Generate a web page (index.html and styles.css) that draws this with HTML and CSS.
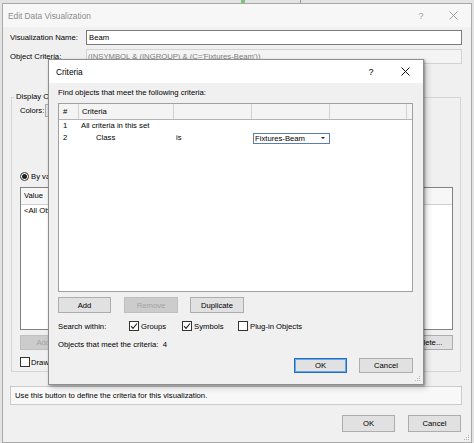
FILE: index.html
```html
<!DOCTYPE html>
<html>
<head>
<meta charset="utf-8">
<title>Edit Data Visualization</title>
<link rel="stylesheet" href="styles.css">
</head>
<body>
<div class="desk"><span class="desk-gap1"></span><span class="desk-green"></span><span class="desk-gap2"></span><span class="desk-line"></span></div>

<div class="win outer">
  <div class="titlebar outer-title">
    <span class="title-text">Edit Data Visualization</span>
    <span class="tb-help">?</span>
    <span class="tb-close"><svg width="9" height="9" viewBox="0 0 9 9"><path d="M0.5 0.5L8.5 8.5M8.5 0.5L0.5 8.5" stroke="#9a9a9a" stroke-width="1" fill="none"/></svg></span>
  </div>
  <div class="outer-body">
    <div class="form-row r1">
      <span class="lbl">Visualization Name:</span>
      <div class="textbox">Beam</div>
    </div>
    <div class="form-row r2">
      <span class="lbl">Object Criteria:</span>
      <div class="textbox readonly"><span class="crit-link">(INSYMBOL &amp; (INGROUP) &amp; (C='Fixtures-Beam'))</span></div>
    </div>
    <fieldset class="group">
      <legend><span class="legend-clip">Display Options</span></legend>
      <div class="colors-row"><span class="colors-lbl">Colors:</span><div class="combo"></div></div>
      <div class="radio-row"><span class="radio"><span class="radio-dot"></span></span><span>By value</span></div>
      <div class="listview">
        <div class="lv-head"><span class="lv-col lv-value">Value</span><span class="lv-col lv-rest"></span></div>
        <div class="lv-row">&lt;All Objects&gt;</div>
      </div>
      <div class="list-btns"><button class="btn btn-add" disabled>Add...</button><button class="btn btn-del">Delete...</button></div>
      <div class="check-row"><span class="checkbox"></span><span>Draw legend</span></div>
    </fieldset>
    <div class="status">Use this button to define the criteria for this visualization.</div>
    <div class="footer"><button class="btn fbtn">OK</button><button class="btn fbtn">Cancel</button></div>
  </div>
  <span class="grip outer-grip"><svg width="7" height="7" viewBox="0 0 7 7"><rect x="5" y="1" width="1" height="1" fill="#b5b5b5"/><rect x="3" y="3" width="1" height="1" fill="#b5b5b5"/><rect x="5" y="3" width="1" height="1" fill="#b5b5b5"/><rect x="1" y="5" width="1" height="1" fill="#b5b5b5"/><rect x="3" y="5" width="1" height="1" fill="#b5b5b5"/><rect x="5" y="5" width="1" height="1" fill="#b5b5b5"/></svg></span>
</div>

<div class="win criteria">
  <div class="titlebar crit-title">
    <span class="title-text">Criteria</span>
    <span class="tb-help">?</span>
    <span class="tb-close"><svg width="9" height="9" viewBox="0 0 9 9"><path d="M0.5 0.5L8.5 8.5M8.5 0.5L0.5 8.5" stroke="#111" stroke-width="1" fill="none"/></svg></span>
  </div>
  <div class="crit-body">
    <div class="find">Find objects that meet the following criteria:</div>
    <div class="ctable">
      <div class="crow chead">
        <span class="cc c1">#</span><span class="cc c2">Criteria</span><span class="cc c3"></span><span class="cc c4"></span><span class="cc c5"></span><span class="cc c6"></span>
      </div>
      <div class="crow cdata">
        <span class="cc c1">1</span><span class="cc c2 wide">All criteria in this set</span><span class="cc c3"></span><span class="cc c4"></span><span class="cc c5"></span><span class="cc c6"></span>
      </div>
      <div class="crow cdata">
        <span class="cc c1">2</span><span class="cc c2 indent">Class</span><span class="cc c3">is</span><span class="cc c4"><span class="dropdown"><span class="dd-text">Fixtures-Beam</span><span class="dd-arrow"></span></span></span><span class="cc c5"></span><span class="cc c6"></span>
      </div>
    </div>
    <div class="crit-btns">
      <button class="btn cb-add">Add</button>
      <button class="btn cb-remove" disabled>Remove</button>
      <button class="btn cb-dup">Duplicate</button>
    </div>
    <div class="search-row">
      <span class="search-lbl">Search within:</span>
      <span class="chk-item chk-groups"><span class="checkbox checked"><svg width="8" height="8" viewBox="0 0 8 8"><path d="M1 4.2L3 6.3L7 1.5" stroke="#222" stroke-width="1.1" fill="none"/></svg></span><span>Groups</span></span>
      <span class="chk-item chk-symbols"><span class="checkbox checked"><svg width="8" height="8" viewBox="0 0 8 8"><path d="M1 4.2L3 6.3L7 1.5" stroke="#222" stroke-width="1.1" fill="none"/></svg></span><span>Symbols</span></span>
      <span class="chk-item"><span class="checkbox"></span><span>Plug-in Objects</span></span>
    </div>
    <div class="count-row">Objects that meet the criteria:&nbsp; 4</div>
    <div class="ok-row"><button class="btn ok-btn">OK</button><button class="btn cancel-btn">Cancel</button></div>
  </div>
  <span class="grip crit-grip"><svg width="7" height="7" viewBox="0 0 7 7"><rect x="5" y="1" width="1" height="1" fill="#b5b5b5"/><rect x="3" y="3" width="1" height="1" fill="#b5b5b5"/><rect x="5" y="3" width="1" height="1" fill="#b5b5b5"/><rect x="1" y="5" width="1" height="1" fill="#b5b5b5"/><rect x="3" y="5" width="1" height="1" fill="#b5b5b5"/><rect x="5" y="5" width="1" height="1" fill="#b5b5b5"/></svg></span>
</div>
</body>
</html>
```

FILE: styles.css
```css
* { box-sizing: border-box; }
html, body { margin: 0; padding: 0; }
body {
  width: 474px;
  height: 443px;
  overflow: hidden;
  position: relative;
  background: #e3e3e3;
  font-family: "Liberation Sans", Arial, sans-serif;
  font-size: 7.7px;
  color: #000;
}

/* desktop strip behind the windows */
.desk { height: 3px; display: flex; }
.desk-gap1 { width: 241px; }
.desk-green { width: 4px; background: #7cc47c; }
.desk-gap2 { width: 55px; }
.desk-line { width: 1px; background: #9a9a9a; }

/* generic window */
.win { background: #f0f0f0; display: flex; flex-direction: column; }
.titlebar { height: 23px; display: flex; align-items: center; flex: 0 0 auto; }
.title-text { font-size: 8.3px; flex: 1; }
.tb-help { width: 34px; text-align: center; font-size: 9px; }
.tb-close { width: 34px; display: flex; justify-content: center; align-items: center; margin-right: 1px; }

/* outer window */
.outer {
  margin-left: 2px;
  width: 470px;
  height: 440px;
  border: 1px solid #a9a9a9;
  position: relative;
}
.outer-title { background: #f7f7f7; padding-left: 5px; }
.outer-title .title-text { color: #8c8c8c; }
.outer-title .tb-help { color: #9a9a9a; width: 30px; }

.outer-body { padding: 0 9px 0 7px; display: flex; flex-direction: column; }
.form-row { display: flex; align-items: center; height: 15px; }
.r1 { margin-top: 3px; }
.r2 { margin-top: 4px; }
.lbl { width: 76px; flex: 0 0 76px; }
.textbox {
  flex: 1;
  height: 15px;
  border: 1px solid #7a7a7a;
  background: #fff;
  padding-left: 2px;
  line-height: 13px;
  white-space: nowrap;
  overflow: hidden;
}
.readonly { background: #f4f4f4; border-color: #d3d3d3; color: #808080; padding-left: 1px; }
.crit-link { text-decoration: underline; }

.group {
  margin: 28px 1px 0;
  padding: 0 7px 3px 8px;
  border: 1px solid #d5d5d5;
  min-width: 0;
  height: 280px;
}
.group legend { padding: 0 2px; margin-left: -6px; line-height: 10px; font-size: 7.7px; }
.legend-clip { display: block; width: 32px; overflow: hidden; white-space: nowrap; }
.colors-row { margin-top: 2px; height: 13px; display: flex; align-items: center; }
.colors-lbl { width: 25px; }
.combo { width: 150px; height: 13px; border: 1px solid #adadad; background: #e5e5e5; }
.radio-row { margin-top: 53px; height: 12px; display: flex; align-items: center; gap: 2px; }
.radio {
  width: 9px; height: 9px; border: 1px solid #333; border-radius: 50%; background: #fff;
  display: flex; align-items: center; justify-content: center;
}
.radio-dot { width: 5px; height: 5px; border-radius: 50%; background: #222; }
.listview { margin-top: 5px; height: 143px; border: 1px solid #828282; background: #fff; }
.lv-head { height: 17px; display: flex; border-bottom: 1px solid #d0d0d0; background: #f7f7f7; }
.lv-col { line-height: 16px; padding-left: 3px; }
.lv-value { width: 29px; border-right: 1px solid #e0e0e0; }
.lv-rest { flex: 1; }
.lv-row { height: 12px; line-height: 12px; padding-left: 3px; }
.list-btns { margin-top: 5px; height: 15px; display: flex; justify-content: space-between; }
.btn-add { width: 53px; }
.btn-del { width: 50px; margin-right: 9px; padding-left: 4px; }
.check-row { margin-top: 7px; height: 10px; display: flex; align-items: center; gap: 1px; }
.checkbox {
  width: 10px; height: 10px; border: 1px solid #333; background: #fff; flex: 0 0 10px;
  display: flex; align-items: center; justify-content: center;
}

.status {
  margin-top: 14px;
  height: 19px;
  border: 1px solid #cbcbcb;
  background: #f8f8f8;
  padding-left: 4px;
  line-height: 17px;
}
.footer { margin-top: 10px; display: flex; justify-content: flex-end; gap: 13px; padding-right: 1px; }
.fbtn { width: 53px; height: 17px; }

.grip { position: absolute; display: block; width: 7px; height: 7px; }
.outer-grip { right: 1px; bottom: 1px; }
.crit-grip { right: 2px; bottom: 2px; }

/* buttons */
.btn {
  font-family: inherit;
  font-size: 7.7px;
  color: #000;
  background: #e1e1e1;
  border: 1px solid #adadad;
  padding: 0;
  margin: 0;
  text-align: center;
}
.btn:disabled { background: #cccccc; border-color: #bfbfbf; color: #a3a3a3; }

/* criteria dialog */
.criteria {
  position: absolute;
  left: 48px;
  top: 59px;
  width: 376px;
  height: 326px;
  border: 1px solid #8f8f8f;
  box-shadow: 1px 1px 2px rgba(0,0,0,0.35), 3px 3px 6px rgba(0,0,0,0.18);
}
.crit-title { background: #fff; padding-left: 7px; }
.crit-body { padding: 0 10px 0 9px; display: flex; flex-direction: column; }
.find { margin-top: 5px; line-height: 10px; }
.ctable { margin-top: 5px; height: 189px; border: 1px solid #a0a0a0; background: #fff; }
.crow { display: grid; grid-template-columns: 20px 95px 78px 78px 77px 1fr; }
.chead { height: 16px; background: #f4f4f4; border-bottom: 1px solid #b5b5b5; }
.chead .cc { border-right: 1px solid #d2d2d2; line-height: 15px; }
.chead .c6 { border-right: none; }
.cdata { height: 12px; }
.cdata .cc { line-height: 12px; }
.cc { padding-left: 3px; white-space: nowrap; }
.c1 { padding-left: 4px; }
.cdata .c2 { padding-left: 2px; }
.cdata .c2.wide { overflow: visible; }
.cdata .c2.indent { padding-left: 17px; }
.cdata .c3 { padding-left: 2px; }
.cdata .c4 { padding-left: 1px; display: flex; align-items: center; }
.dropdown {
  width: 77px; height: 11px;
  border: 1px solid #5a7fb0;
  background: #fff;
  display: flex; align-items: center;
  padding-left: 1px;
}
.dd-text { flex: 1; line-height: 9px; }
.dd-arrow {
  width: 0; height: 0; margin-right: 4px;
  border-left: 2px solid transparent; border-right: 2px solid transparent; border-top: 2px solid #222;
}
.crit-btns { margin-top: 5px; height: 16px; display: flex; }
.crit-btns .btn { height: 16px; }
.cb-add { width: 53px; }
.cb-remove { width: 54px; margin-left: 13px; }
.cb-dup { width: 54px; margin-left: 12px; }
.search-row { margin-top: 7px; height: 12px; display: flex; align-items: center; }
.search-lbl { width: 71px; }
.chk-item { display: flex; align-items: center; gap: 2px; }
.chk-groups { width: 53px; }
.chk-symbols { width: 56px; }
.count-row { margin-top: 8px; line-height: 10px; }
.ok-row { margin-top: 8px; height: 15px; display: flex; justify-content: flex-end; gap: 12px; }
.ok-row .btn { height: 15px; }
.ok-btn { width: 53px; border-color: #1c6fc9; box-shadow: inset 0 0 0 1px #6ea6e0; }
.cancel-btn { width: 54px; }
```
